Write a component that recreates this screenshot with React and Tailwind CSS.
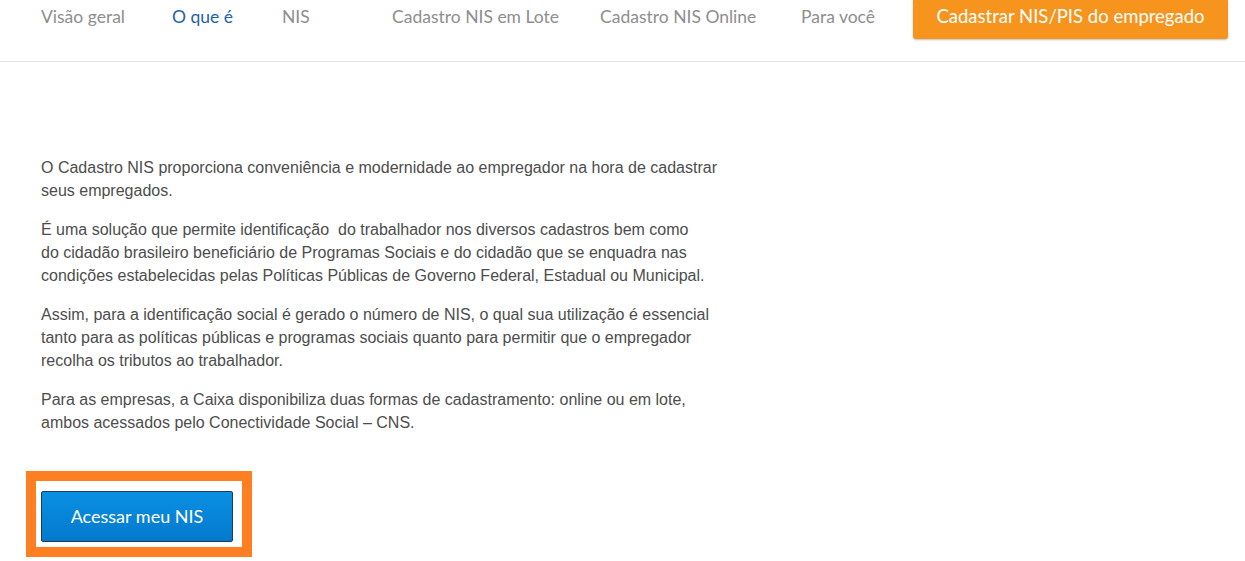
const NAV = [
  { label: 'Visão geral', w: 'w-[131px]' },
  { label: 'O que é', w: 'w-[110px]', active: true },
  { label: 'NIS', w: 'w-[110px]' },
  { label: 'Cadastro NIS em Lote', w: 'w-[208px]' },
  { label: 'Cadastro NIS Online', w: 'w-[201px]' },
  { label: 'Para você', w: 'w-[112px]' },
];

export default function App() {
  return (
    <div className="min-h-[561px] bg-white" style={{ fontFamily: '"Liberation Sans", Arial, sans-serif' }}>
      {/* Top navigation */}
      <header className="h-[62px] border-b border-[#dfe5e5] flex items-start pl-[41px]">
        <nav className="flex items-start font-['Lato',sans-serif] text-[17.5px]">
          {NAV.map((item) => (
            <a
              key={item.label}
              className={`${item.w} shrink-0 pt-[4px] leading-[26px] ${item.active ? 'text-[#1f5fae]' : 'text-[#8e8e8e]'}`}
            >
              {item.label}
            </a>
          ))}
        </nav>
        <button className="w-[315px] h-[39px] shrink-0 bg-[#f7941d] text-white text-[18.5px] font-['Lato',sans-serif] rounded-b-[3px] shadow-[0_1px_2px_rgba(0,0,0,0.25)] pb-[5px]">
          Cadastrar NIS/PIS do empregado
        </button>
      </header>

      {/* Content */}
      <main className="pt-[94px]">
        <div className="pl-[41px] text-[16px] leading-[23px] text-[#4d4d4d]">
          <p className="mb-[16px]">
            O Cadastro NIS proporciona conveniência e modernidade ao empregador na hora de cadastrar<br />
            seus empregados.
          </p>
          <p className="mb-[16px]">
            É uma solução que permite identificação&nbsp; do trabalhador nos diversos cadastros bem como<br />
            do cidadão brasileiro beneficiário de Programas Sociais e do cidadão que se enquadra nas<br />
            condições estabelecidas pelas Políticas Públicas de Governo Federal, Estadual ou Municipal.
          </p>
          <p className="mb-[16px]">
            Assim, para a identificação social é gerado o número de NIS, o qual sua utilização é essencial<br />
            tanto para as políticas públicas e programas sociais quanto para permitir que o empregador<br />
            recolha os tributos ao trabalhador.
          </p>
          <p>
            Para as empresas, a Caixa disponibiliza duas formas de cadastramento: online ou em lote,<br />
            ambos acessados pelo Conectividade Social – CNS.
          </p>
        </div>

        {/* Highlighted action */}
        <div className="ml-[26px] mt-[37px] inline-block border-[10px] border-[#fd7f22] pt-[10px] pl-[5px] pr-[9px] pb-[5px]">
          <button className="block w-[192px] h-[51px] rounded-[2px] border border-[#1d3b5e] bg-gradient-to-b from-[#0a90e4] to-[#0479cc] text-white text-[18px] font-['Lato',sans-serif]">
            Acessar meu NIS
          </button>
        </div>
      </main>
    </div>
  );
}
